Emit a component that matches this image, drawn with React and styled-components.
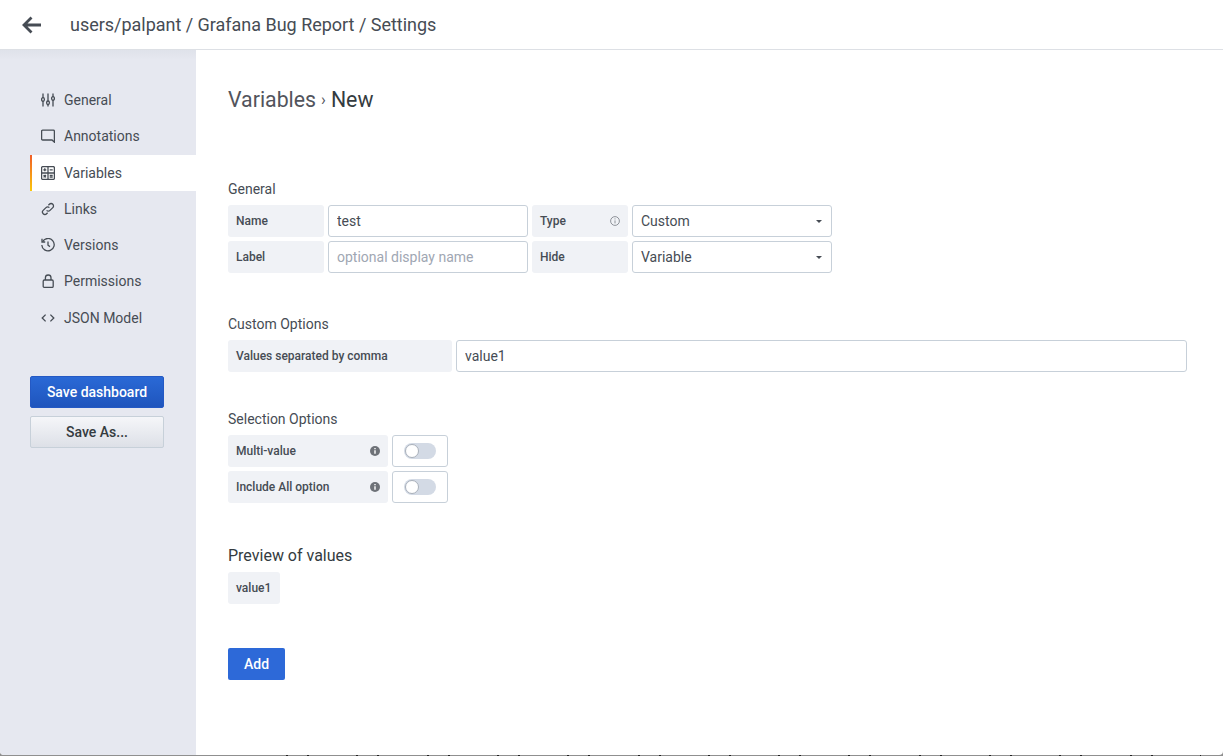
import styled, { createGlobalStyle } from 'styled-components';

const GlobalStyle = createGlobalStyle`
	html,
	body {
		margin: 0;
		padding: 0;
		height: 100%;
		background: #8f8f8f;
		font-family: Roboto, 'Liberation Sans', sans-serif;
		color: #464c54;
		overflow: hidden;
	}
`;

const Page = styled.div`
	position: relative;
	display: flex;
	flex-direction: column;
	height: 755px;
	overflow: hidden;
	background: #fff;
	border-radius: 0 0 4px 4px;
`;

// the ticks along the lower edge of the photographed window
const EdgeTicks = styled.div`
	position: fixed;
	left: 286px;
	right: 22px;
	bottom: 0;
	height: 1px;
	background: repeating-linear-gradient(
		90deg,
		#222 0,
		#222 2px,
		transparent 2px,
		transparent 21px,
		#222 21px,
		#222 23px,
		transparent 23px,
		transparent 70.3px
	);
`;

const Header = styled.header`
	display: flex;
	align-items: center;
	flex: 0 0 50px;
	box-sizing: border-box;
	border-bottom: 1px solid #dde0e5;
	padding-left: 22px;
`;

const BackButton = styled.button`
	display: flex;
	padding: 0;
	margin-right: 28px;
	border: none;
	background: none;
	color: #464c54;
`;

const Breadcrumb = styled.div`
	font-size: 18px;
	letter-spacing: -0.02px;
	color: #464c54;
`;

const Body = styled.div`
	display: flex;
	flex: 1;
	min-height: 0;
`;

const Sidebar = styled.aside`
	flex: 0 0 196px;
	box-sizing: border-box;
	padding: 32px 0 0 30px;
	background: linear-gradient(#dfe2ea, #e6e8f0 10px);
`;

const NavList = styled.nav`
	display: flex;
	flex-direction: column;
	margin-bottom: 40.25px;
`;

const NavItem = styled.a`
	display: flex;
	align-items: center;
	gap: 9px;
	height: 36.25px;
	padding-left: 9px;
	font-size: 14px;
	color: #464c54;
	background: ${(p) => (p.$active ? '#fff' : 'transparent')};
	border-left: 2px solid transparent;
	border-image: ${(p) => (p.$active ? 'linear-gradient(#f05a28, #fbca0a) 1' : 'none')};

	svg {
		flex: 0 0 14px;
	}
`;

const SideButton = styled.button`
	display: block;
	width: 134px;
	height: 32px;
	box-sizing: border-box;
	margin-bottom: 8px;
	border-radius: 2px;
	font: 500 14px Roboto, sans-serif;
	border: 1px solid ${(p) => (p.$primary ? '#2459c4' : '#c7d0d9')};
	color: ${(p) => (p.$primary ? '#fff' : '#343b40')};
	background: ${(p) => (p.$primary ? 'linear-gradient(#2a69d6, #1f55bd)' : 'linear-gradient(#f5f6f9, #dde0e7)')};
`;

const Content = styled.main`
	flex: 1;
	padding: 37px 36px 0 32px;
`;

const Title = styled.h1`
	display: flex;
	align-items: center;
	height: 25px;
	margin: 0 0 69px;
	font-size: 21.3px;
	font-weight: 400;
	color: #52545c;

	span {
		font-size: 16px;
		margin: 0 5px;
	}

	b {
		font-weight: 400;
		color: #343b40;
	}
`;

const Section = styled.section`
	margin-bottom: ${(p) => p.$gap}px;
`;

const SectionTitle = styled.h5`
	margin: 0 0 8px;
	height: 16px;
	line-height: 16px;
	font-size: ${(p) => p.$size || 14}px;
	font-weight: 400;
	color: ${(p) => p.$color || '#464c54'};
`;

const Row = styled.div`
	display: flex;
	gap: 4px;
	margin-bottom: 4px;
`;

const FieldLabel = styled.label`
	display: flex;
	align-items: center;
	justify-content: space-between;
	flex: 0 0 ${(p) => p.$width}px;
	width: ${(p) => p.$width}px;
	height: 32px;
	box-sizing: border-box;
	padding: 0 8px;
	border-radius: 3px;
	background: #f0f2f6;
	font-size: 12px;
	font-weight: 500;
	color: #464c54;
`;

const TextInput = styled.input`
	flex: ${(p) => (p.$width ? `0 0 ${p.$width}px` : 1)};
	width: ${(p) => (p.$width ? `${p.$width}px` : 'auto')};
	height: 32px;
	box-sizing: border-box;
	padding: 0 8px;
	border: 1px solid #c7d0d9;
	border-radius: 3px;
	background: #fff;
	font: 400 14px Roboto, sans-serif;
	color: #464c54;
	outline: none;

	&::placeholder {
		color: #9fa7b3;
		opacity: 1;
	}
`;

const Select = styled.div`
	display: flex;
	align-items: center;
	justify-content: space-between;
	width: 200px;
	height: 32px;
	box-sizing: border-box;
	padding: 0 8px;
	border: 1px solid #c7d0d9;
	border-radius: 3px;
	font-size: 14px;
	color: #464c54;
`;

const Caret = styled.i`
	width: 0;
	height: 0;
	margin-right: 1px;
	border-left: 3.5px solid transparent;
	border-right: 3.5px solid transparent;
	border-top: 3.5px solid #464c54;
`;

const SwitchBox = styled.div`
	display: flex;
	align-items: center;
	justify-content: center;
	width: 56px;
	height: 32px;
	box-sizing: border-box;
	border: 1px solid #c7d0d9;
	border-radius: 3px;
`;

const Track = styled.div`
	position: relative;
	width: 32px;
	height: 16px;
	border-radius: 8px;
	background: #d3dae5;
`;

const Knob = styled.div`
	position: absolute;
	top: 1px;
	left: 1px;
	width: 14px;
	height: 14px;
	box-sizing: border-box;
	border-radius: 50%;
	background: #fff;
	border: 1px solid #a9b0ba;
`;

const Chip = styled.div`
	display: inline-flex;
	align-items: center;
	height: 32px;
	min-width: 52px;
	box-sizing: border-box;
	padding: 0 8px;
	border-radius: 3px;
	background: #f0f2f6;
	font-size: 12px;
	font-weight: 500;
`;

const AddButton = styled.button`
	display: block;
	width: 57px;
	height: 32px;
	border: none;
	border-radius: 2px;
	background: #2d69d8;
	color: #fff;
	font: 500 14px Roboto, sans-serif;
`;

const icon = { width: 14, height: 14, viewBox: '0 0 14 14', fill: 'none', stroke: 'currentColor', strokeWidth: 1.3 };

const icons = {
	General: (
		<svg {...icon}>
			<path d='M2 0.5v13M7 0.5v13M12 0.5v13' />
			<ellipse cx='2' cy='6.5' rx='1.4' ry='1.8' fill='#e6e8f0' />
			<ellipse cx='7' cy='9.8' rx='1.4' ry='1.8' fill='#e6e8f0' />
			<ellipse cx='12' cy='5.5' rx='1.4' ry='1.8' fill='#e6e8f0' />
		</svg>
	),
	Annotations: (
		<svg {...icon}>
			<path d='M1.6 1.2h10.8a1 1 0 0 1 1 1v11l-2.4-2.2H1.6a1 1 0 0 1-1-1V2.2a1 1 0 0 1 1-1z' />
		</svg>
	),
	Variables: (
		<svg {...icon}>
			<rect x='0.6' y='0.6' width='12.8' height='12.8' rx='1.2' />
			<path d='M7 0.6v12.8M0.6 7h12.8M2.3 3.8h3M3.8 2.3v3M8.7 3.8h3M8.7 9.3h3M8.7 11h3M2.6 9l2.4 2.4M5 9l-2.4 2.4' />
		</svg>
	),
	Links: (
		<svg {...icon}>
			<path d='M5.6 8.4a2.4 2.4 0 0 0 3.4 0l2.8-2.8a2.4 2.4 0 0 0-3.4-3.4L7.4 3.2' />
			<path d='M8.4 5.6a2.4 2.4 0 0 0-3.4 0L2.2 8.4a2.4 2.4 0 0 0 3.4 3.4l1-1' />
		</svg>
	),
	Versions: (
		<svg {...icon}>
			<path d='M1.6 3.6A6.2 6.2 0 1 1 0.8 7' />
			<path d='M1 0.8v3.2h3.2M7 3.6v3.6l2 1.4' />
		</svg>
	),
	Permissions: (
		<svg {...icon}>
			<rect x='2.2' y='6' width='10' height='7.4' rx='1.2' />
			<path d='M4.4 6V3.8a2.8 2.8 0 0 1 5.6 0V6' />
		</svg>
	),
	'JSON Model': (
		<svg {...icon}>
			<path d='M4.6 3.6L1.2 7l3.4 3.4M9.4 3.6L12.8 7l-3.4 3.4' />
		</svg>
	),
};

const navItems = ['General', 'Annotations', 'Variables', 'Links', 'Versions', 'Permissions', 'JSON Model'];

function InfoIcon({ outline }) {
	if (outline) {
		return (
			<svg width='10' height='10' viewBox='0 0 10 10' fill='none' stroke='#767b83' strokeWidth='0.8'>
				<circle cx='5' cy='5' r='4.4' />
				<path d='M5 4.4v3M5 2.4v1' />
			</svg>
		);
	}
	return (
		<svg width='10' height='10' viewBox='0 0 10 10'>
			<circle cx='5' cy='5' r='5' fill='#6e7278' />
			<path d='M5 4.3v3.4M5 2v1.3' stroke='#fff' strokeWidth='1.4' />
		</svg>
	);
}

function Toggle() {
	return (
		<SwitchBox>
			<Track>
				<Knob />
			</Track>
		</SwitchBox>
	);
}

function App() {
	return (
		<Page>
			<GlobalStyle />
			<Header>
				<BackButton>
					<svg width='20' height='20' viewBox='0 0 20 20' fill='none' stroke='currentColor' strokeWidth='2.8'>
						<path d='M19 10H2.5M9.5 2.5L2 10l7.5 7.5' />
					</svg>
				</BackButton>
				<Breadcrumb>users/palpant / Grafana Bug Report / Settings</Breadcrumb>
			</Header>
			<Body>
				<Sidebar>
					<NavList>
						{navItems.map((item) => (
							<NavItem key={item} $active={item === 'Variables'}>
								{icons[item]}
								{item}
							</NavItem>
						))}
					</NavList>
					<SideButton $primary>Save dashboard</SideButton>
					<SideButton>Save As...</SideButton>
				</Sidebar>
				<Content>
					<Title>
						Variables<span>›</span>
						<b>New</b>
					</Title>
					<Section $gap={43}>
						<SectionTitle>General</SectionTitle>
						<Row>
							<FieldLabel $width={96}>Name</FieldLabel>
							<TextInput $width={200} defaultValue='test' />
							<FieldLabel $width={96}>
								Type
								<InfoIcon outline />
							</FieldLabel>
							<Select>
								Custom
								<Caret />
							</Select>
						</Row>
						<Row>
							<FieldLabel $width={96}>Label</FieldLabel>
							<TextInput $width={200} placeholder='optional display name' />
							<FieldLabel $width={96}>Hide</FieldLabel>
							<Select>
								Variable
								<Caret />
							</Select>
						</Row>
					</Section>
					<Section $gap={39}>
						<SectionTitle>Custom Options</SectionTitle>
						<Row>
							<FieldLabel $width={224}>Values separated by comma</FieldLabel>
							<TextInput defaultValue='value1' />
						</Row>
					</Section>
					<Section $gap={45}>
						<SectionTitle>Selection Options</SectionTitle>
						<Row>
							<FieldLabel $width={160}>
								Multi-value
								<InfoIcon />
							</FieldLabel>
							<Toggle />
						</Row>
						<Row>
							<FieldLabel $width={160}>
								Include All option
								<InfoIcon />
							</FieldLabel>
							<Toggle />
						</Row>
					</Section>
					<Section $gap={44}>
						<SectionTitle $size={16} $color='#343b40'>
							Preview of values
						</SectionTitle>
						<Chip>value1</Chip>
					</Section>
					<AddButton>Add</AddButton>
				</Content>
			</Body>
			<EdgeTicks />
		</Page>
	);
}

export default App;
